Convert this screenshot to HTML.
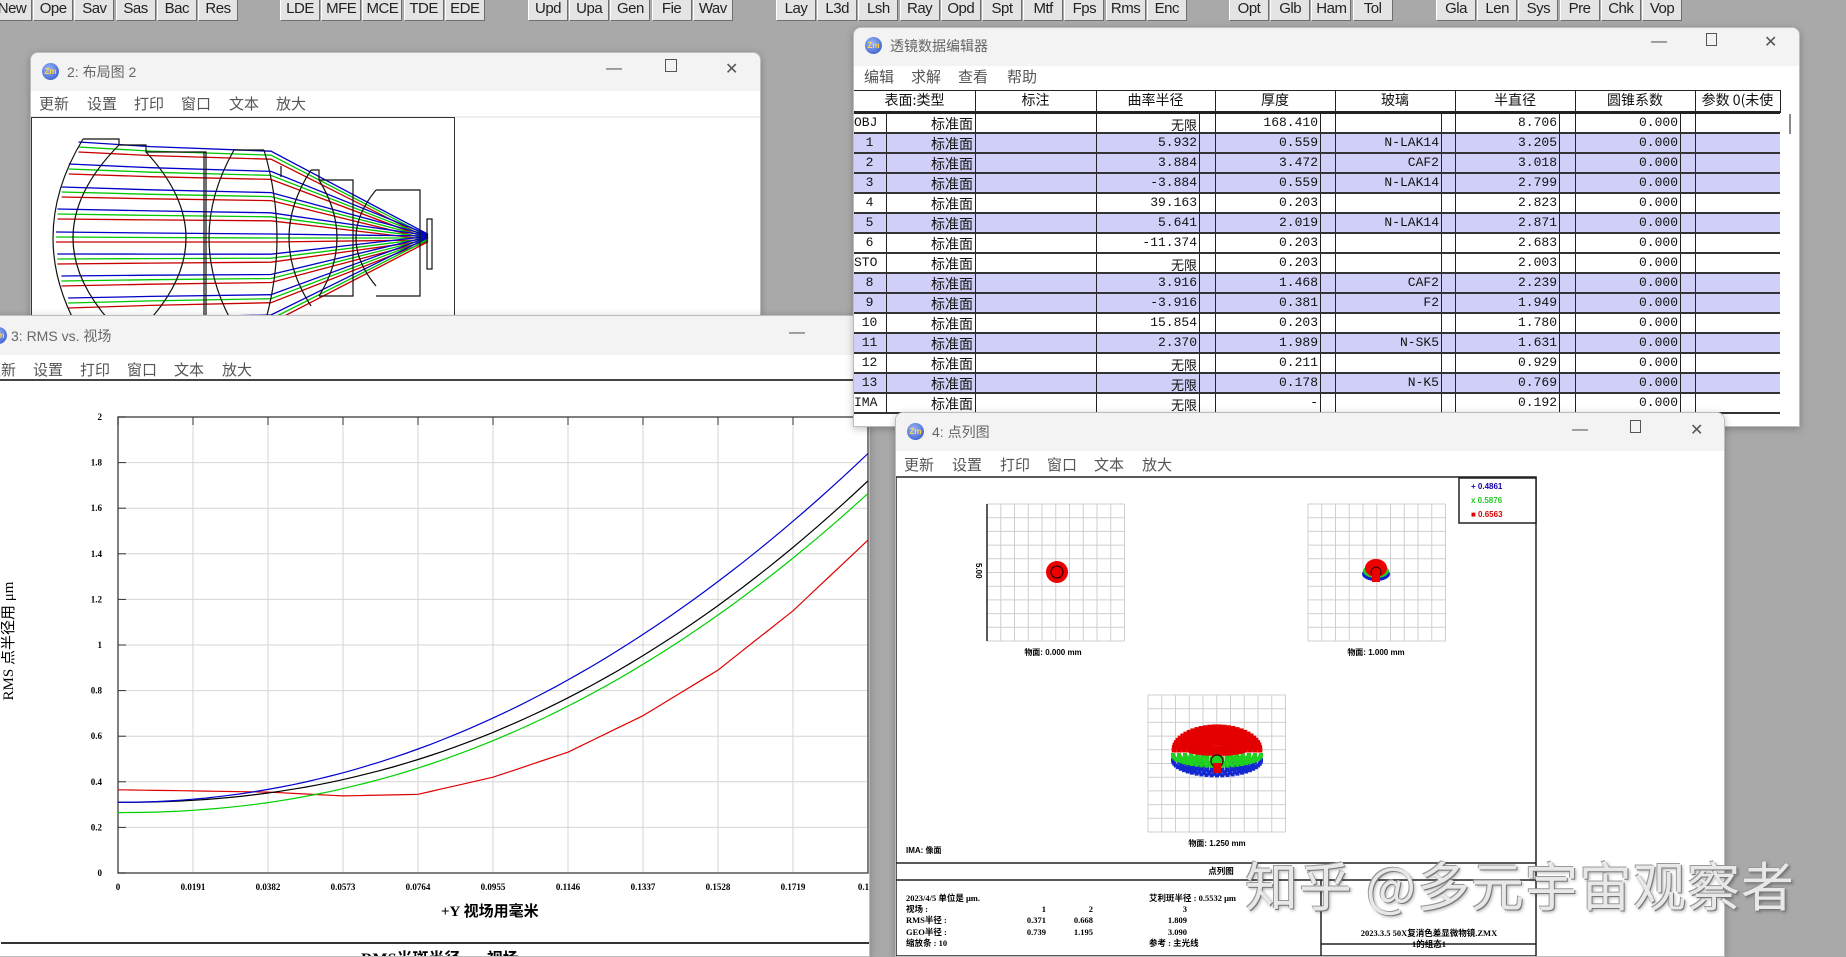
<!DOCTYPE html>
<html><head><meta charset="utf-8">
<style>
*{margin:0;padding:0;box-sizing:border-box}
body{width:1846px;height:957px;overflow:hidden;background:#a9a9a9;position:relative;font-family:"Liberation Sans","Noto Sans CJK SC",sans-serif}
.abs{position:absolute}
.btn{position:absolute;top:0;height:21px;width:40px;background:#e4e4e4;border-right:1px solid #6e6e6e;border-bottom:1px solid #6e6e6e;border-left:1px solid #fff;font-size:15px;color:#222;text-align:center;line-height:18px;letter-spacing:-0.5px}
.win{position:absolute;background:#fff;border:1px solid #bdbdbd;border-radius:8px 8px 0 0;overflow:hidden;box-shadow:0 2px 8px rgba(0,0,0,.25)}
.tb{position:absolute;left:0;right:0;top:0;background:#f3f3f3}
.ttl{position:absolute;font-size:14px;color:#666;font-family:"Liberation Sans","Noto Sans CJK SC",sans-serif}
.ico{position:absolute;width:17px;height:17px;border-radius:50%;background:radial-gradient(circle at 40% 35%,#9bb6ff,#2a4fc0);color:#ffd54a;font-size:8px;font-weight:bold;text-align:center;line-height:17px}
.mn{position:absolute;font-size:15px;color:#555;font-family:"Noto Sans CJK SC",sans-serif}
.ctl{position:absolute;font-size:16px;color:#555;font-family:"Liberation Sans",sans-serif}
.cell{position:absolute;font-family:"Liberation Mono","Noto Sans CJK SC",monospace;font-size:13px;color:#111;white-space:nowrap}
.hd{position:absolute;font-family:"Noto Sans CJK SC",sans-serif;font-size:14px;color:#111;text-align:center}
</style></head><body>
<div id="tbar"></div>

<!-- Window 2: layout -->
<div class="win" style="left:30px;top:52px;width:731px;height:300px;z-index:1">
  <div class="tb" style="height:38px"></div>
  <div class="ico" style="left:11px;top:10px">Zm</div>
  <div class="ttl" style="left:36px;top:9px">2: 布局图 2</div>
  <div class="ctl" style="left:575px;top:7px">—</div>
  <div class="ctl" style="left:634px;top:6px;width:12px;height:13px;border:1px solid #555"></div>
  <div class="ctl" style="left:694px;top:6px">✕</div>
  <div class="mn" style="left:8px;top:40px">更新</div><div class="mn" style="left:56px;top:40px">设置</div><div class="mn" style="left:103px;top:40px">打印</div><div class="mn" style="left:150px;top:40px">窗口</div><div class="mn" style="left:198px;top:40px">文本</div><div class="mn" style="left:245px;top:40px">放大</div>
  <div class="abs" style="left:0;top:63px;width:729px;height:2px;background:#eee"></div>
  <svg class="abs" style="left:0;top:64px" width="424" height="236" id="lay"></svg>
</div>

<!-- RMS window -->
<div class="win" style="left:-8px;top:315px;width:878px;height:642px;z-index:2;border-radius:0">
  <div class="tb" style="height:39px"></div>
  <div class="ico" style="left:-3px;top:11px">Zm</div>
  <div class="ttl" style="left:18px;top:10px">3: RMS vs. 视场</div>
  <div class="ctl" style="left:796px;top:8px">—</div>
  <div class="mn" style="left:-7px;top:43px">更新</div><div class="mn" style="left:40px;top:43px">设置</div><div class="mn" style="left:87px;top:43px">打印</div><div class="mn" style="left:134px;top:43px">窗口</div><div class="mn" style="left:181px;top:43px">文本</div><div class="mn" style="left:229px;top:43px">放大</div>
  <div class="abs" style="left:0;top:63px;width:878px;height:2px;background:#444"></div>
  <svg class="abs" style="left:8px;top:0" width="870" height="642" id="rms"></svg>
</div>

<!-- LDE -->
<div class="win" style="left:853px;top:27px;width:947px;height:400px;z-index:3">
  <div class="tb" style="height:38px"></div>
  <div class="ico" style="left:11px;top:9px">Zm</div>
  <div class="ttl" style="left:36px;top:8px">透镜数据编辑器</div>
  <div class="ctl" style="left:797px;top:5px">—</div>
  <div class="ctl" style="left:852px;top:5px;width:11px;height:13px;border:1px solid #555"></div>
  <div class="ctl" style="left:910px;top:4px">✕</div>
  <div class="mn" style="left:10px;top:38px">编辑</div><div class="mn" style="left:57px;top:38px">求解</div><div class="mn" style="left:104px;top:38px">查看</div><div class="mn" style="left:153px;top:38px">帮助</div>
  <div id="lde" class="abs" style="left:0;top:0;width:947px;height:400px"></div>
</div>

<!-- Spot -->
<div class="win" style="left:895px;top:412px;width:830px;height:545px;z-index:4">
  <div class="tb" style="height:38px"></div>
  <div class="ico" style="left:11px;top:10px">Zm</div>
  <div class="ttl" style="left:36px;top:9px">4: 点列图</div>
  <div class="ctl" style="left:676px;top:8px">—</div>
  <div class="ctl" style="left:734px;top:7px;width:11px;height:13px;border:1px solid #555"></div>
  <div class="ctl" style="left:794px;top:7px">✕</div>
  <div class="mn" style="left:8px;top:41px">更新</div><div class="mn" style="left:56px;top:41px">设置</div><div class="mn" style="left:104px;top:41px">打印</div><div class="mn" style="left:151px;top:41px">窗口</div><div class="mn" style="left:198px;top:41px">文本</div><div class="mn" style="left:246px;top:41px">放大</div>
  <svg class="abs" style="left:0;top:0" width="830" height="545" id="spot"></svg>
</div>

<div class="abs" style="left:1245px;top:846px;z-index:9;font-family:'Noto Sans CJK SC',sans-serif;font-size:53px;color:#e8e8e8;text-shadow:1px 1px 0 #777,-1px -1px 0 #999,2px 2px 3px rgba(0,0,0,.3);white-space:nowrap;letter-spacing:1px">知乎 @多元宇宙观察者</div>

<script>
(function(){
 var groups=[[-8,["New","Ope","Sav","Sas","Bac","Res"]],[280,["LDE","MFE","MCE","TDE","EDE"]],[528,["Upd","Upa","Gen","Fie","Wav"]],[776,["Lay","L3d","Lsh","Ray","Opd","Spt","Mtf","Fps","Rms","Enc"]],[1229,["Opt","Glb","Ham","Tol"]],[1436,["Gla","Len","Sys","Pre","Chk","Vop"]]];
 var h="";groups.forEach(function(g){g[1].forEach(function(n,i){h+='<div class="btn" style="left:'+(g[0]+i*41.2)+'px">'+n+'</div>';});});
 document.getElementById('tbar').innerHTML=h;
})();
(function(){
 var s='',ox=-30,oy=-116;
 function P(x,y){return (x+ox).toFixed(1)+','+(y+oy).toFixed(1);}
 s+='<rect x="0.5" y="0.5" width="423" height="240" fill="#fff" stroke="#333"/>';
 var cols=['#0000c8','#00c800','#c80000'];
 var hs=[-90,-68,-45,-23,0,22,44,66,88];
 hs.forEach(function(h,i){cols.forEach(function(c,k){
   var y0=237+h-6+k*5, xs=55+Math.abs(h)*0.25*Math.abs(h)/90;
   var ym=237+h*0.92-4+k*4;
   var fy=237+(k-1)*2+h*0.02;
   s+='<polyline fill="none" stroke="'+c+'" stroke-width="1.3" points="'+P(xs,y0)+' '+P(150,y0+(ym-y0)*0.5)+' '+P(270,ym)+' '+P(427,fy)+'"/>';
 });});
 var L='fill="none" stroke="#111" stroke-width="1.2"';
 function arc(x1,y1,xm){return '<path '+L+' d="M'+P(x1,y1)+' Q'+P(2*xm-x1,237)+' '+P(x1,474-y1)+'"/>';}
 s+=arc(82,138,52)+arc(118,144,72)+arc(145,151,185)+arc(233,149,208)+arc(263,149,276)+arc(310,169,288)+arc(318,179,336)+arc(375,189,355);
 s+='<polyline '+L+' points="'+P(82,138)+' '+P(118,138)+' '+P(118,144)+' '+P(145,144)+' '+P(145,151)+' '+P(205,151)+' '+P(205,330)+'"/>';
 s+='<line '+L+' x1="'+(203+ox)+'" y1="'+(151+oy)+'" x2="'+(203+ox)+'" y2="240"/>';
 s+='<polyline '+L+' points="'+P(233,149)+' '+P(263,149)+'"/>';
 s+='<polyline '+L+' points="'+P(310,169)+' '+P(318,169)+' '+P(318,179)+' '+P(352,179)+' '+P(352,295)+' '+P(318,295)+'"/>';
 s+='<polyline '+L+' points="'+P(375,189)+' '+P(419,189)+' '+P(419,295)+' '+P(375,295)+'"/>';
 s+='<line '+L+' x1="'+(280+ox)+'" y1="'+(165+oy)+'" x2="'+(280+ox)+'" y2="'+(176+oy)+'"/>';
 s+='<rect '+L+' x="'+(426+ox)+'" y="'+(218+oy)+'" width="5" height="50"/>';
 document.getElementById('lay').innerHTML=s;
})();
(function(){
 var s='',X0=117,X1=867,Y0=872-315,Y2=416-315;
 function X(t){return X0+(X1-X0)*t;} function Y(v){return Y0-(Y0-Y2)*v/2;}
 for(var i=1;i<10;i++)s+='<line x1="'+X(i/10)+'" y1="'+Y2+'" x2="'+X(i/10)+'" y2="'+Y0+'" stroke="#d6d6d6"/>';
 for(var j=1;j<10;j++)s+='<line x1="'+X0+'" y1="'+Y(j*0.2)+'" x2="'+X1+'" y2="'+Y(j*0.2)+'" stroke="#d6d6d6"/>';
 s+='<rect x="'+X0+'" y="'+Y2+'" width="'+(X1-X0)+'" height="'+(Y0-Y2)+'" fill="none" stroke="#555" stroke-width="1.5"/>';
 var yl=['0','0.2','0.4','0.6','0.8','1','1.2','1.4','1.6','1.8','2'];
 yl.forEach(function(l,j){s+='<text x="'+(X0-16)+'" y="'+(Y(j*0.2)+3)+'" font-size="9" font-weight="bold" text-anchor="end" font-family="Liberation Serif">'+l+'</text><line x1="'+X0+'" x2="'+(X0+8)+'" y1="'+Y(j*0.2)+'" y2="'+Y(j*0.2)+'" stroke="#333"/>';});
 var xl=['0','0.0191','0.0382','0.0573','0.0764','0.0955','0.1146','0.1337','0.1528','0.1719','0.191'];
 xl.forEach(function(l,i){s+='<text x="'+X(i/10)+'" y="'+(Y0+17)+'" font-size="9" font-weight="bold" text-anchor="middle" font-family="Liberation Serif">'+l+'</text><line x1="'+X(i/10)+'" x2="'+X(i/10)+'" y1="'+Y2+'" y2="'+(Y2+8)+'" stroke="#333"/>';});
 function curve(f,c){var p=[];for(var k=0;k<=60;k++){var t=k/60;p.push(X(t).toFixed(1)+','+Y(f(t)).toFixed(1));}return '<polyline fill="none" stroke="'+c+'" stroke-width="1.2" points="'+p.join(' ')+'"/>';}
 function interp(pts){return function(t){for(var i=0;i<pts.length-1;i++){if(t<=pts[i+1][0]){var a=pts[i],b=pts[i+1],u=(t-a[0])/(b[0]-a[0]);return a[1]+(b[1]-a[1])*u;}}return pts[pts.length-1][1];};}
 s+=curve(interp([[0,0.365],[0.2,0.355],[0.3,0.338],[0.4,0.345],[0.5,0.42],[0.6,0.53],[0.7,0.69],[0.8,0.89],[0.9,1.15],[1,1.46]]),'#e00000');
 s+=curve(function(t){return 0.265+1.4*Math.pow(t,2.15)},'#00d000');
 s+=curve(function(t){return 0.31+1.41*Math.pow(t,2.2)},'#000');
 s+=curve(function(t){return 0.31+1.53*Math.pow(t,2.05)},'#0000d0');
 s+='<text x="440" y="600" font-size="15" font-weight="bold" font-family="Liberation Serif,Noto Sans CJK SC">+Y 视场用毫米</text>';
 s+='<text transform="translate(12,325) rotate(-90)" font-size="15" font-family="Liberation Serif,Noto Sans CJK SC" text-anchor="middle">RMS 点半径用 μm</text>';
 s+='<line x1="0" x2="870" y1="627" y2="627" stroke="#333" stroke-width="2"/>';
 s+='<text x="360" y="648" font-size="16" font-weight="bold" font-family="Liberation Serif,Noto Sans CJK SC">RMS光斑半径 vs. 视场</text>';
 document.getElementById('rms').innerHTML=s;
})();
(function(){
 var h='',ox=853,oy=27;
 function d(x,y,w,hh,st){return '<div class="abs" style="left:'+(x-ox)+'px;top:'+(y-oy)+'px;width:'+w+'px;height:'+hh+'px;'+(st||'')+'"></div>';}
 var rows=[["OBJ","无限","168.410","","8.706",0],["1","5.932","0.559","N-LAK14","3.205",1],["2","3.884","3.472","CAF2","3.018",1],["3","-3.884","0.559","N-LAK14","2.799",1],["4","39.163","0.203","","2.823",0],["5","5.641","2.019","N-LAK14","2.871",1],["6","-11.374","0.203","","2.683",0],["STO","无限","0.203","","2.003",0],["8","3.916","1.468","CAF2","2.239",1],["9","-3.916","0.381","F2","1.949",1],["10","15.854","0.203","","1.780",0],["11","2.370","1.989","N-SK5","1.631",1],["12","无限","0.211","","0.929",0],["13","无限","0.178","N-K5","0.769",1],["IMA","无限","-","","0.192",0]];
 h+=d(853,89,926,23,'border-top:1px solid #222;background:#fff');
 var hx=[[853,974,'表面:类型'],[974,1095,'标注'],[1095,1214,'曲率半径'],[1214,1334,'厚度'],[1334,1454,'玻璃'],[1454,1574,'半直径'],[1574,1694,'圆锥系数'],[1694,1779,'参数 0(未使']];
 hx.forEach(function(c){h+='<div class="hd" style="left:'+(c[0]-ox)+'px;top:'+(89-oy)+'px;width:'+(c[1]-c[0])+'px;overflow:hidden;white-space:nowrap">'+c[2]+'</div>';h+=d(c[1],89,1,23,'background:#222');});
 h+=d(853,110,926,3,'background:#222');
 rows.forEach(function(r,i){var y=113+i*20;
  h+=d(853,y,926,18,'background:'+(r[5]?'#cfcff7':'#fff'));
  h+=d(853,y+18,926,2,'background:#333');
  [885,974,1095,1198,1214,1319,1334,1440,1454,1558,1574,1679,1694].forEach(function(x){h+=d(x,y,1,18,'background:#222');});
  var tx=function(xr,t){return '<div class="cell" style="left:'+(xr-200-ox)+'px;width:200px;text-align:right;top:'+(y-oy+1)+'px">'+t+'</div>';};
  h+='<div class="cell" style="left:'+(853-ox)+'px;width:31px;text-align:'+(r[0].length>2?'left':'center')+';top:'+(y-oy+1)+'px">'+r[0]+'</div>';
  h+='<div class="cell" style="left:'+(885-ox)+'px;width:87px;text-align:right;top:'+(y-oy)+'px;font-family:Noto Sans CJK SC;font-size:14px">标准面</div>';
  h+=tx(1196,r[1])+tx(1317,r[2])+tx(1438,r[3])+tx(1556,r[4])+tx(1677,'0.000');
 });
 h+=d(1779,113,21,300,'background:#fff');
 h+=d(1788,113,2,20,'background:#888');
 document.getElementById('lde').innerHTML=h;
})();
(function(){
 var s='',ox=895,oy=412;
 function R(x,y,w,hh,st){return '<rect x="'+(x-ox)+'" y="'+(y-oy)+'" width="'+w+'" height="'+hh+'" '+st+'/>';}
 s+=R(895,476,640,479,'fill="#fff" stroke="#222" stroke-width="1.5"');
 s+=R(1458,477,77,45,'fill="#fff" stroke="#222" stroke-width="1.5"');
 function grid(x,y){var g='';for(var i=0;i<=10;i++){g+='<line x1="'+(x-ox+i*13.75)+'" x2="'+(x-ox+i*13.75)+'" y1="'+(y-oy)+'" y2="'+(y-oy+137)+'" stroke="#cfcfcf"/>';g+='<line y1="'+(y-oy+i*13.7)+'" y2="'+(y-oy+i*13.7)+'" x1="'+(x-ox)+'" x2="'+(x-ox+137.5)+'" stroke="#cfcfcf"/>';}return g;}
 s+=grid(986,503)+grid(1307,503)+grid(1147,694);
 s+='<line x1="'+(986-ox)+'" x2="'+(986-ox)+'" y1="'+(503-oy)+'" y2="'+(640-oy)+'" stroke="#222" stroke-width="1.5"/>';
 s+='<text x="'+(1052-ox)+'" y="'+(654-oy)+'" font-size="8" font-weight="bold" text-anchor="middle">物面: 0.000 mm</text>';
 s+='<text x="'+(1375-ox)+'" y="'+(654-oy)+'" font-size="8" font-weight="bold" text-anchor="middle">物面: 1.000 mm</text>';
 s+='<text x="'+(1216-ox)+'" y="'+(845-oy)+'" font-size="8" font-weight="bold" text-anchor="middle">物面: 1.250 mm</text>';
 s+='<text x="'+(975-ox)+'" y="'+(562-oy)+'" font-size="8" font-weight="bold" transform="rotate(90 '+(975-ox)+' '+(562-oy)+')">5.00</text>';
 s+='<text x="'+(905-ox)+'" y="'+(852-oy)+'" font-size="8" font-weight="bold">IMA: 像面</text>';
 var cx=1056-ox,cy=571-oy;
 s+='<circle cx="'+cx+'" cy="'+cy+'" r="11" fill="#e00"/><circle cx="'+cx+'" cy="'+cy+'" r="6" fill="none" stroke="#300" stroke-width="1.3"/>';
 cx=1375-ox;cy=570-oy;
 s+='<ellipse cx="'+cx+'" cy="'+(cy+3)+'" rx="14" ry="7" fill="#1020d0"/><ellipse cx="'+cx+'" cy="'+cy+'" rx="13" ry="7" fill="#20d020"/><ellipse cx="'+cx+'" cy="'+(cy-3)+'" rx="11" ry="9" fill="#e00"/><circle cx="'+cx+'" cy="'+(cy+1)+'" r="5" fill="none" stroke="#300"/><rect x="'+(cx-4)+'" y="'+(cy+1)+'" width="8" height="10" fill="#e00"/>';
 // blob 3
 cx=1216-ox;cy=757-oy;
 var p='',a,r,th,x,y,n;
 // blue bowl
 for(r=14;r<=44;r+=6){n=Math.round(r*0.6);for(a=0;a<=n;a++){th=Math.PI*a/n;x=cx-Math.cos(th)*r;y=cy+2+Math.sin(th)*r*0.35+ (44-r)*0.1;p+='<rect x="'+(x-2)+'" y="'+(y-2)+'" width="4" height="4" fill="#1428d0"/>';}}
 // green band
 for(r=14;r<=44;r+=6){n=Math.round(r*0.6);for(a=0;a<=n;a++){th=Math.PI*a/n;x=cx-Math.cos(th)*r;y=cy-3+Math.sin(th)*r*0.25;p+='<rect x="'+(x-2)+'" y="'+(y-2)+'" width="4" height="4" fill="#20d020"/>';}}
 // red dome
 for(r=12;r<=42;r+=5){n=Math.round(r*0.7);for(a=0;a<=n;a++){th=Math.PI*a/n;x=cx-Math.cos(th)*r*1.02;y=cy-8-Math.sin(th)*r*0.55;p+='<rect x="'+(x-2.5)+'" y="'+(y-2.5)+'" width="5" height="5" fill="#e40000"/>';}}
 s+=p+'<ellipse cx="'+cx+'" cy="'+(cy-7)+'" rx="30" ry="5" fill="#e40000"/><circle cx="'+cx+'" cy="'+(cy+3)+'" r="6" fill="#20d020" stroke="#300" stroke-width="1.3"/><rect x="'+(cx-4)+'" y="'+(cy+5)+'" width="8" height="10" fill="#e40000"/>';
 s+='<text x="'+(1470-ox)+'" y="'+(488-oy)+'" font-size="8" font-weight="bold" fill="#10a">+ 0.4861</text>';
 s+='<text x="'+(1470-ox)+'" y="'+(502-oy)+'" font-size="8" font-weight="bold" fill="#2c2">x 0.5876</text>';
 s+='<text x="'+(1470-ox)+'" y="'+(516-oy)+'" font-size="8" font-weight="bold" fill="#d00">■ 0.6563</text>';
 s+='<line x1="0" x2="640" y1="'+(862-oy)+'" y2="'+(862-oy)+'" stroke="#222" stroke-width="1.5"/>';
 s+='<line x1="0" x2="640" y1="'+(879-oy)+'" y2="'+(879-oy)+'" stroke="#222" stroke-width="1.5"/>';
 s+='<line x1="'+(1320-ox)+'" x2="'+(1320-ox)+'" y1="'+(879-oy)+'" y2="543" stroke="#222" stroke-width="1.5"/>';
 s+='<line x1="'+(1320-ox)+'" x2="640" y1="'+(943-oy)+'" y2="'+(943-oy)+'" stroke="#222" stroke-width="1.5"/>';
 var T=function(x,y,t,a){return '<text x="'+(x-ox)+'" y="'+(y-oy)+'" font-size="8.5" font-weight="bold" font-family="Liberation Serif,Noto Sans CJK SC"'+(a?' text-anchor="'+a+'"':'')+'>'+t+'</text>';};
 s+=T(1220,873,'点列图','middle');
 s+=T(905,900,'2023/4/5  单位是 μm.')+T(1148,900,'艾利斑半径 : 0.5532 μm');
 s+=T(905,911,'视场   :')+T(1045,911,'1','end')+T(1092,911,'2','end')+T(1186,911,'3','end');
 s+=T(905,922,'RMS半径 :')+T(1045,922,'0.371','end')+T(1092,922,'0.668','end')+T(1186,922,'1.809','end');
 s+=T(905,934,'GEO半径 :')+T(1045,934,'0.739','end')+T(1092,934,'1.195','end')+T(1186,934,'3.090','end');
 s+=T(905,945,'缩放条  :    10')+T(1148,945,'参考 : 主光线');
 s+=T(1428,935,'2023.3.5 50X复消色差显微物镜.ZMX','middle')+T(1428,946,'1的组态1','middle');
 document.getElementById('spot').innerHTML=s;
})();
</script>
</body></html>
